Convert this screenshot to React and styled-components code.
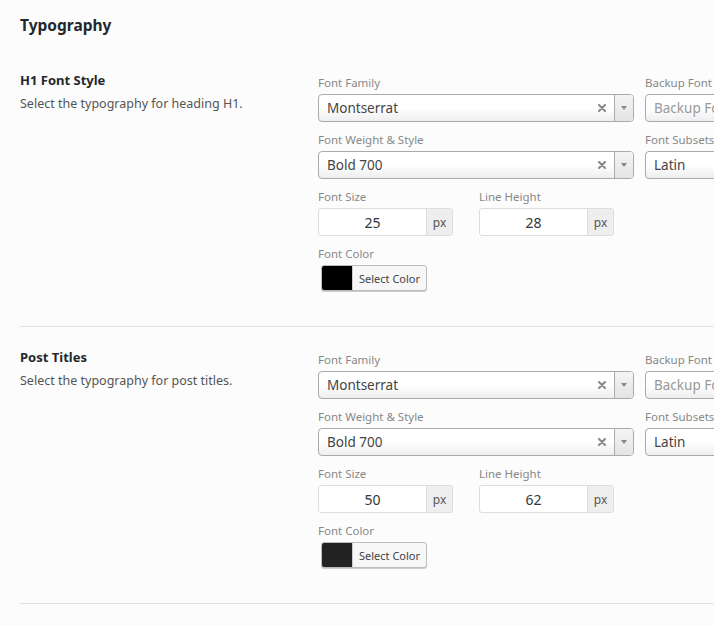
import React from 'react';
import styled, { createGlobalStyle } from 'styled-components';

const GlobalStyle = createGlobalStyle`
  html, body {
    margin: 0;
    background: #fcfcfc;
  }
  body {
    font-family: "Noto Sans", "Open Sans", sans-serif;
    color: #23282d;
  }
`;

const SECTIONS = [
  {
    title: 'H1 Font Style',
    desc: 'Select the typography for heading H1.',
    size: 25,
    lineHeight: 28,
    color: '#000000',
  },
  {
    title: 'Post Titles',
    desc: 'Select the typography for post titles.',
    size: 50,
    lineHeight: 62,
    color: '#222222',
  },
];

const Page = styled.div`
  padding: 13px 0 0 20px;
  overflow: hidden;
  width: 694px;
`;

const Heading = styled.h2`
  margin: 0 0 13px;
  font-size: 15.5px;
  line-height: 24px;
  font-weight: 700;
  color: #23282d;
`;

const Section = styled.section`
  display: grid;
  grid-template-columns: 298px 1fr;
  padding: 21px 0 35px;
  border-bottom: 1px solid #e2e2e2;
`;

const Info = styled.div``;

const Title = styled.h3`
  margin: 0 0 6px;
  font-size: 13px;
  line-height: 18px;
  font-weight: 700;
  color: #23282d;
`;

const Desc = styled.p`
  margin: 0;
  font-size: 12.5px;
  line-height: 18px;
  color: #555;
`;

const Fields = styled.div`
  padding-top: 4px;
  display: grid;
  grid-template-columns: 316px 316px;
  column-gap: 11px;
  align-content: start;
`;

const Field = styled.div`
  margin-bottom: ${p => (p.$last ? 0 : '10px')};
`;

const Label = styled.div`
  font-size: 11.5px;
  line-height: 16px;
  color: #888;
  margin-bottom: 3px;
  white-space: nowrap;
`;

const SelectBox = styled.div`
  box-sizing: border-box;
  height: 28px;
  display: flex;
  align-items: center;
  border: 1px solid #aaa;
  border-radius: 4px;
  background: linear-gradient(to bottom, #fff 0%, #fff 50%, #eee 100%);
  overflow: hidden;
`;

const SelectValue = styled.span`
  flex: 1;
  padding-left: 8px;
  font-size: 13.5px;
  color: ${p => (p.$placeholder ? '#999' : '#444')};
  white-space: nowrap;
`;

const Clear = styled.svg`
  width: 8px;
  height: 8px;
  margin-right: 8px;
`;

const Arrow = styled.span`
  align-self: stretch;
  width: 18px;
  border-left: 1px solid #aaa;
  background: linear-gradient(to bottom, #f4f4f4 0%, #e4e4e4 100%);
  display: flex;
  align-items: center;
  justify-content: center;

  &::after {
    content: '';
    border-left: 3px solid transparent;
    border-right: 3px solid transparent;
    border-top: 4px solid #888;
  }
`;

const SizeRow = styled.div`
  display: flex;
  gap: 26px;
`;

const UnitInput = styled.div`
  box-sizing: border-box;
  width: 135px;
  height: 28px;
  display: flex;
  border: 1px solid #ddd;
  border-radius: 3px;
  overflow: hidden;
  background: #fff;
`;

const NumberValue = styled.span`
  flex: 1;
  display: flex;
  align-items: center;
  justify-content: center;
  font-size: 14px;
  color: #32373c;
`;

const Unit = styled.span`
  width: 25px;
  border-left: 1px solid #ddd;
  background: #eee;
  display: flex;
  align-items: center;
  justify-content: center;
  font-size: 12px;
  color: #555;
`;

const ColorButton = styled.div`
  box-sizing: border-box;
  margin: 1px 0 0 3px;
  display: flex;
  width: fit-content;
  height: 26px;
  border: 1px solid #bbb;
  border-radius: 3px;
  background: #f7f7f7;
  overflow: hidden;
  box-shadow: 0 1px 0 #ccc;
`;

const Swatch = styled.span`
  width: 30px;
  background: ${p => p.$color};
`;

const ColorText = styled.span`
  display: flex;
  align-items: center;
  padding: 0 6px;
  border-left: 1px solid #ccc;
  font-size: 11px;
  color: #444;
`;

const Select = ({ value, placeholder }) => (
  <SelectBox>
    <SelectValue $placeholder={!value}>{value || placeholder}</SelectValue>
    {value && (
      <Clear viewBox="0 0 8 8">
        <path d="M1 1L7 7M7 1L1 7" stroke="#888" strokeWidth="2" strokeLinecap="round" />
      </Clear>
    )}
    <Arrow />
  </SelectBox>
);

const Typography = ({ section }) => (
  <Section>
    <Info>
      <Title>{section.title}</Title>
      <Desc>{section.desc}</Desc>
    </Info>
    <Fields>
      <Field>
        <Label>Font Family</Label>
        <Select value="Montserrat" />
      </Field>
      <Field>
        <Label>Backup Font</Label>
        <Select placeholder="Backup Font" />
      </Field>
      <Field>
        <Label>Font Weight &amp; Style</Label>
        <Select value="Bold 700" />
      </Field>
      <Field>
        <Label>Font Subsets</Label>
        <Select value="Latin" />
      </Field>
      <Field>
        <SizeRow>
          <div>
            <Label>Font Size</Label>
            <UnitInput>
              <NumberValue>{section.size}</NumberValue>
              <Unit>px</Unit>
            </UnitInput>
          </div>
          <div>
            <Label>Line Height</Label>
            <UnitInput>
              <NumberValue>{section.lineHeight}</NumberValue>
              <Unit>px</Unit>
            </UnitInput>
          </div>
        </SizeRow>
      </Field>
      <div />
      <Field $last>
        <Label>Font Color</Label>
        <ColorButton>
          <Swatch $color={section.color} />
          <ColorText>Select Color</ColorText>
        </ColorButton>
      </Field>
    </Fields>
  </Section>
);

export default function App() {
  return (
    <Page>
      <GlobalStyle />
      <Heading>Typography</Heading>
      {SECTIONS.map(s => (
        <Typography key={s.title} section={s} />
      ))}
    </Page>
  );
}
